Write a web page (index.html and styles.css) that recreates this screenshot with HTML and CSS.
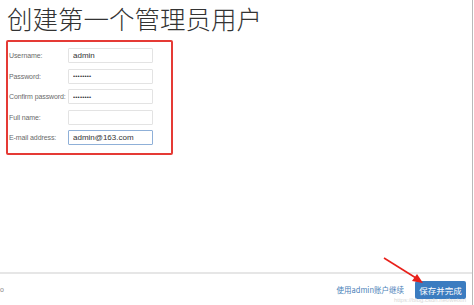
FILE: index.html
```html
<!DOCTYPE html>
<html lang="zh-CN">

<head>
    <meta charset="UTF-8">
    <meta name="viewport" content="width=device-width, initial-scale=1.0">
    <title>创建第一个管理员用户</title>
    <link rel="stylesheet" href="styles.css">
</head>

<body>
    <div class="page">
        <h1 class="title">创建第一个管理员用户</h1>

        <div class="form-box">
            <div class="row">
                <label>Username:</label>
                <input type="text" value="admin">
            </div>
            <div class="row">
                <label>Password:</label>
                <input type="password" class="secret" value="admin123">
            </div>
            <div class="row">
                <label>Confirm password:</label>
                <input type="password" class="secret" value="admin123">
            </div>
            <div class="row">
                <label>Full name:</label>
                <input type="text" value="">
            </div>
            <div class="row">
                <label>E-mail address:</label>
                <input type="text" class="focused" value="admin@163.com">
            </div>
        </div>

        <div class="spacer"></div>

        <div class="footer">
            <span class="version">o</span>
            <a class="skip" href="#">使用admin账户继续</a>
            <button class="save">保存并完成</button>
            <span class="mark">https://blog.csdn.net/weixin</span>
        </div>

        <svg class="arrow" width="50" height="40" viewBox="0 0 50 40">
            <line x1="4" y1="3" x2="36" y2="23" stroke="#e8201a" stroke-width="1.6" />
            <polygon points="43,28 32,26 37,19" fill="#e8201a" />
        </svg>
    </div>
</body>

</html>
```

FILE: styles.css
```css
* {
    padding: 0;
    margin: 0;
    box-sizing: border-box;
}

body {
    background: #ffffff;
    font-family: "Liberation Sans", Arial, "Noto Sans CJK SC", sans-serif;
}

.page {
    position: relative;
    width: 473px;
    height: 305px;
    border-right: 1px solid #b9b9b9;
    display: flex;
    flex-direction: column;
    overflow: hidden;
}

.title {
    font-family: "Noto Sans CJK SC", sans-serif;
    font-weight: 300;
    font-size: 25.5px;
    line-height: 36px;
    color: #333333;
    padding-left: 7px;
    height: 40px;
}

.form-box {
    width: 167px;
    margin-left: 6px;
    border: 2px solid #e53a35;
    border-radius: 2px;
    padding: 6px 18px 8px 1px;
    display: flex;
    flex-direction: column;
    gap: 5.5px;
}

.row {
    display: flex;
    align-items: center;
    height: 15px;
}

.row label {
    width: 59px;
    font-size: 7px;
    letter-spacing: -0.1px;
    color: #6a6a6a;
    white-space: nowrap;
}

.row input {
    width: 85px;
    height: 15px;
    border: 1px solid #e3e3e3;
    border-radius: 1px;
    padding: 0 4px;
    font-family: "Liberation Sans", Arial, sans-serif;
    font-size: 8px;
    color: #333333;
    outline: none;
}

.row input.secret {
    font-size: 6px;
    letter-spacing: 0.2px;
}

.row input.focused {
    border-color: #8fb0d8;
}

.spacer {
    flex: 1;
}

.footer {
    position: relative;
    height: 33px;
    border-top: 2px solid #e6e6e6;
    display: flex;
    align-items: center;
    padding-right: 6px;
}

.version {
    margin-left: 0;
    font-size: 7px;
    color: #888888;
}

.skip {
    margin-left: auto;
    margin-right: 11px;
    font-family: "Noto Sans CJK SC", sans-serif;
    font-size: 7.5px;
    color: #4a7fb8;
    text-decoration: none;
}

.save {
    width: 51px;
    height: 18px;
    border: none;
    border-radius: 2px;
    background: #3b7cc0;
    color: #ffffff;
    font-family: "Noto Sans CJK SC", sans-serif;
    font-size: 8.5px;
}

.mark {
    position: absolute;
    right: 6px;
    bottom: 2px;
    font-size: 6px;
    color: #d8d8d8;
}

.arrow {
    position: absolute;
    left: 380px;
    top: 255px;
}
```
